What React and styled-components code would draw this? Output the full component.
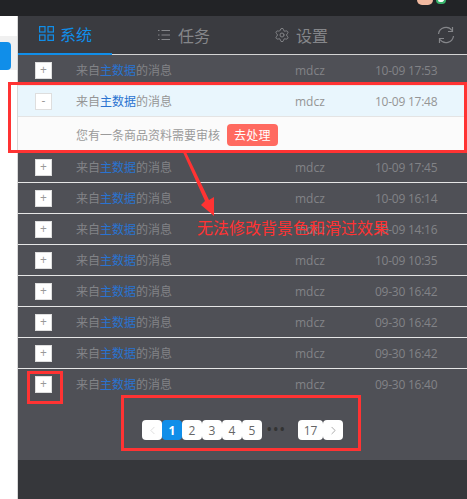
import React from "react";
import styled, { createGlobalStyle } from "styled-components";
import { Settings, ChevronLeft, ChevronRight } from "lucide-react";

const Global = createGlobalStyle`
  html, body { margin: 0; padding: 0; background: #fff; }
  body { font-family: "Open Sans", "Noto Sans CJK SC", sans-serif; overflow: hidden; }
  * { box-sizing: border-box; }
`;

const Page = styled.div`
  position: relative;
  width: 467px;
  height: 499px;
  overflow: hidden;
  display: flex;
  flex-direction: column;
`;
const TopBar = styled.div`
  height: 16px;
  flex: none;
  background: #222326;
  display: flex;
  justify-content: flex-end;
  padding-right: 21px;
`;
const Avatar = styled.div`
  width: 16px;
  height: 5px;
  background: #f2b9a0;
  border-radius: 0 0 6px 6px;
`;
const Status = styled.div`
  width: 10px;
  height: 4px;
  margin-left: 3px;
  background: #fff;
  border: 2px solid #38b36b;
  border-top: 0;
  border-radius: 0 0 6px 6px;
`;
const Body = styled.div`
  flex: 1;
  display: flex;
  min-height: 0;
`;
const Side = styled.div`
  width: 18px;
  flex: none;
  background: #fff;
  border-right: 1px solid #d8d8d8;
  padding-top: 20px;
`;
const SideActive = styled.div`
  height: 34px;
  background: #f0f0f0;
  padding-top: 6px;
`;
const SideButton = styled.div`
  width: 11px;
  height: 28px;
  background: #108ee9;
  border-radius: 0 4px 4px 0;
`;
const Main = styled.div`
  flex: 1;
  display: flex;
  flex-direction: column;
  background: #36373b;
`;
const Tabs = styled.div`
  height: 39px;
  flex: none;
  display: flex;
  align-items: center;
  background: #3a3b40;
  border-bottom: 1px solid #d4d4d4;
`;
const Tab = styled.div`
  height: 39px;
  width: ${(p) => p.$w}px;
  flex: none;
  display: flex;
  align-items: center;
  padding: 0 0 1px ${(p) => p.$pl}px;
  gap: ${(p) => p.$gap}px;
  font-size: 16px;
  white-space: nowrap;
  color: ${(p) => (p.$active ? "#108ee9" : "#85868a")};
  border-bottom: ${(p) => (p.$active ? "2px solid #108ee9" : "0")};
`;
const Refresh = styled.div`
  margin-left: auto;
  margin-right: 12px;
  color: #85868a;
  display: flex;
`;
const Panel = styled.div`
  height: 405px;
  flex: none;
  background: #4f5056;
  display: flex;
  flex-direction: column;
`;
const Row = styled.div`
  height: 31px;
  flex: none;
  display: flex;
  align-items: center;
  background: ${(p) => (p.$open ? "#e9f6fd" : "transparent")};
  border-bottom: 1px solid ${(p) => (p.$last ? "transparent" : p.$open ? "#e4e4e4" : "#e6e6e6")};
  font-size: 12px;
  color: ${(p) => (p.$open ? "#959595" : "#828387")};
`;
const Toggle = styled.div`
  width: 17px;
  height: 17px;
  flex: none;
  margin-left: 17px;
  background: #fff;
  border: 1px solid #dedede;
  display: flex;
  align-items: center;
  justify-content: center;
  color: #999;
  font-size: 12px;
  line-height: 1;
`;
const Title = styled.div`
  width: 219px;
  margin-left: 24px;
  flex: none;
`;
const Source = styled.span`
  color: #2a73d0;
`;
const Author = styled.div`
  width: 80px;
  flex: none;
`;
const Time = styled.div`
  flex: none;
  letter-spacing: -0.25px;
`;
const Detail = styled.div`
  height: 35px;
  flex: none;
  display: flex;
  align-items: center;
  padding-left: 58px;
  gap: 7px;
  background: #fbfbfb;
  font-size: 12px;
  color: #9a9a9a;
`;
const Action = styled.div`
  background: #ff6a60;
  color: #fff;
  height: 22px;
  padding: 0 7px;
  border-radius: 4px;
  font-size: 12px;
  display: flex;
  align-items: center;
  letter-spacing: 0.2px;
`;
const Pager = styled.div`
  display: flex;
  align-items: center;
  height: 20px;
  margin: 20px 0 0 124px;
`;
const PageBtn = styled.div`
  width: ${(p) => p.$w || 20}px;
  height: 20px;
  flex: none;
  background: ${(p) => (p.$active ? "#108ee9" : "#fff")};
  color: ${(p) => (p.$active ? "#fff" : p.$dim ? "#c4c4c4" : "#666")};
  border-radius: 4px;
  font-size: 12px;
  font-weight: ${(p) => (p.$active ? 700 : 400)};
  display: flex;
  align-items: center;
  justify-content: center;
`;
const Dots = styled.div`
  width: 36px;
  flex: none;
  padding-left: 5px;
  color: #333;
  letter-spacing: 2px;
  font-size: 12px;
  font-weight: 700;
  line-height: 20px;
`;
const Frame = styled.div`
  position: absolute;
  left: ${(p) => p.$x}px;
  top: ${(p) => p.$y}px;
  width: ${(p) => p.$w}px;
  height: ${(p) => p.$h}px;
  border: 3px solid #ff3333;
  pointer-events: none;
`;
const Note = styled.div`
  position: absolute;
  left: 197px;
  top: 218px;
  color: #ff3333;
  font-size: 16px;
  line-height: 20px;
  white-space: nowrap;
`;
const Arrow = styled.svg`
  position: absolute;
  left: 180px;
  top: 150px;
`;

const GridIcon = () => (
  <svg width="15" height="15" viewBox="0 0 15 15" fill="none" stroke="currentColor" strokeWidth="1.2">
    <rect x="0.6" y="0.6" width="5.4" height="5.4" />
    <rect x="9" y="0.6" width="5.4" height="5.4" />
    <rect x="0.6" y="9" width="5.4" height="5.4" />
    <rect x="9" y="9" width="5.4" height="5.4" />
  </svg>
);

const ListIcon = () => (
  <svg width="12" height="12" viewBox="0 0 12 12" fill="none" stroke="currentColor" strokeWidth="1">
    <path d="M0 1.5h1.5M3.5 1.5H12M0 6h1.5M3.5 6H12M0 10.5h1.5M3.5 10.5H12" />
  </svg>
);

const SyncIcon = () => (
  <svg width="18" height="18" viewBox="0 0 18 18" fill="none" stroke="currentColor" strokeWidth="1.2">
    <path d="M1.5 8 A7.5 7.5 0 0 1 15 4.5" />
    <path d="M15.5 1 V5.5 H11" />
    <path d="M16.5 10 A7.5 7.5 0 0 1 3 13.5" />
    <path d="M2.5 17 V12.5 H7" />
  </svg>
);

const rows = [
  ["10-09 17:53"],
  ["10-09 17:48", true],
  ["10-09 17:45"],
  ["10-09 16:14"],
  ["10-09 14:16"],
  ["10-09 10:35"],
  ["09-30 16:42"],
  ["09-30 16:42"],
  ["09-30 16:42"],
  ["09-30 16:40"],
];

export default function App() {
  return (
    <Page>
      <Global />
      <TopBar>
        <Avatar />
        <Status />
      </TopBar>
      <Body>
        <Side>
          <SideActive>
            <SideButton />
          </SideActive>
        </Side>
        <Main>
          <Tabs>
            <Tab $active $w={94} $pl={21} $gap={6}>
              <GridIcon />
              系统
            </Tab>
            <Tab $w={118} $pl={46} $gap={8}>
              <ListIcon />
              任务
            </Tab>
            <Tab $w={110} $pl={44} $gap={6}>
              <Settings size={16} strokeWidth={1.4} />
              设置
            </Tab>
            <Refresh>
              <SyncIcon />
            </Refresh>
          </Tabs>
          <Panel>
            {rows.map(([time, open], i) => (
              <React.Fragment key={i}>
                <Row $open={open} $last={i === rows.length - 1}>
                  <Toggle>{open ? "-" : "+"}</Toggle>
                  <Title>
                    来自<Source>主数据</Source>的消息
                  </Title>
                  <Author>mdcz</Author>
                  <Time>{time}</Time>
                </Row>
                {open && (
                  <Detail>
                    您有一条商品资料需要审核
                    <Action>去处理</Action>
                  </Detail>
                )}
              </React.Fragment>
            ))}
            <Pager>
              <PageBtn $dim><ChevronLeft size={13} strokeWidth={1} /></PageBtn>
              <PageBtn $active>1</PageBtn>
              <PageBtn>2</PageBtn>
              <PageBtn>3</PageBtn>
              <PageBtn>4</PageBtn>
              <PageBtn>5</PageBtn>
              <Dots>•••</Dots>
              <PageBtn $w={25}>17</PageBtn>
              <PageBtn><ChevronRight size={13} strokeWidth={1} /></PageBtn>
            </Pager>
          </Panel>
        </Main>
      </Body>
      <Frame $x={8} $y={82} $w={459} $h={71} />
      <Frame $x={27} $y={371} $w={36} $h={33} />
      <Frame $x={121} $y={395} $w={240} $h={56} />
      <Arrow width="40" height="80" viewBox="0 0 40 80">
        <path d="M2 0 L5 0 L29 50 L34 47 L34 66 L21 55 L25 51 Z" fill="#ff3333" />
      </Arrow>
      <Note>无法修改背景色和滑过效果</Note>
    </Page>
  );
}
